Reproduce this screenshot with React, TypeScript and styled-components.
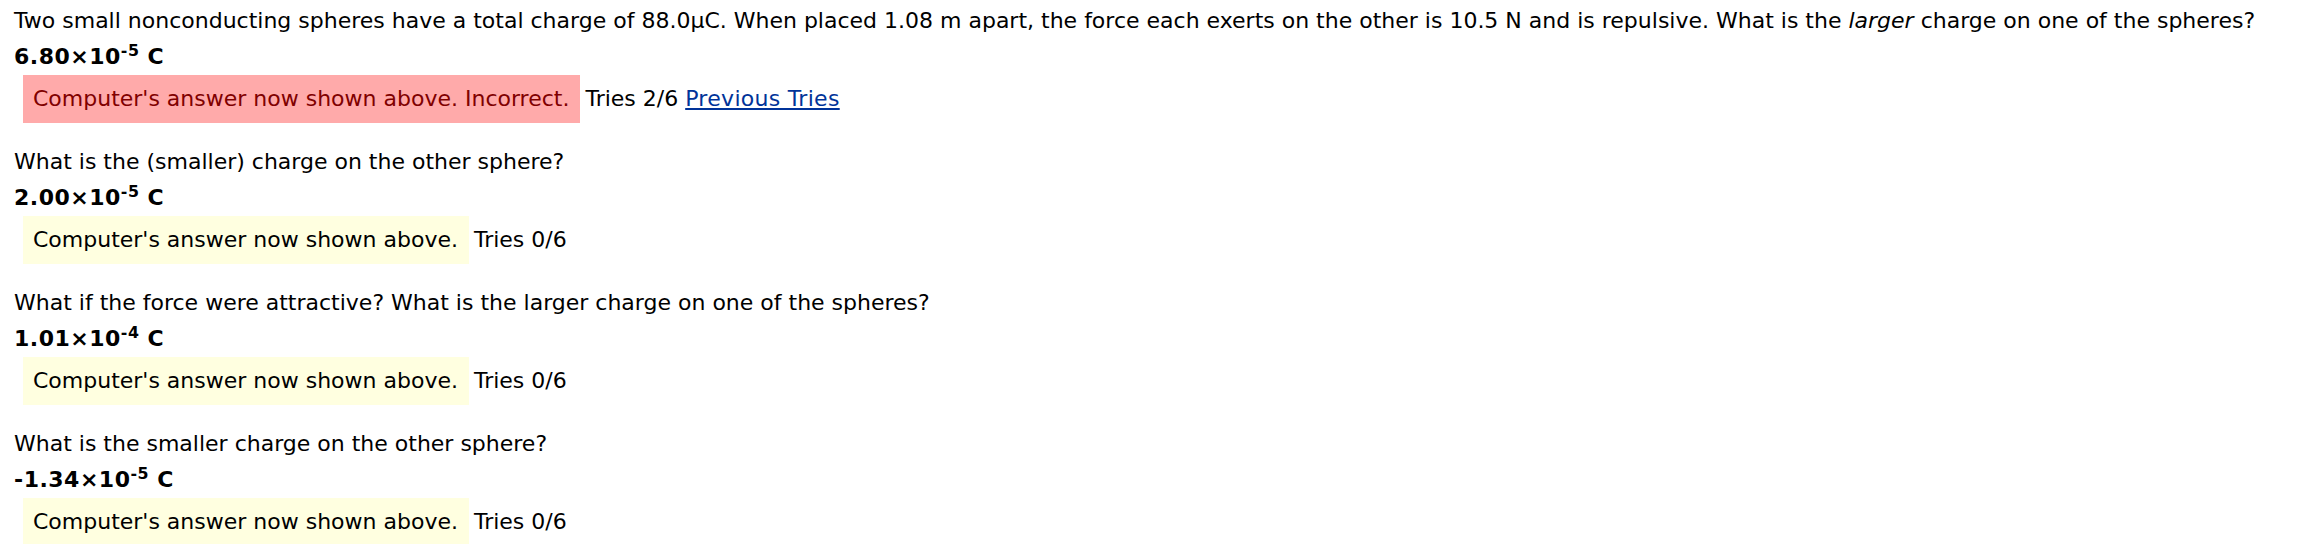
import React from "react";
import styled, { createGlobalStyle } from "styled-components";

const Global = createGlobalStyle`
  html, body { margin: 0; padding: 0; background: #ffffff; }
  body { font-family: "DejaVu Sans", Verdana, sans-serif; color: #000; }
`;

const Page = styled.div`
  padding: 9px 14px 0 14px;
  font-size: 22px;
  line-height: 24px;
`;

const Block = styled.section`
  display: flex;
  flex-direction: column;
  align-items: flex-start;
  padding-bottom: 27px;
`;

const Question = styled.div`
  white-space: nowrap;
`;

const Answer = styled.div`
  margin-top: 12px;
  font-weight: bold;
  letter-spacing: 0.5px;
  sup {
    font-size: 0.72em;
    line-height: 0;
    vertical-align: 0.5em;
  }
`;

const FeedbackRow = styled.div`
  margin-top: 6px;
  margin-left: 9px;
  display: flex;
  align-items: center;
  white-space: pre;
`;

const Status = styled.span<{ $tone: "incorrect" | "shown" }>`
  display: inline-block;
  padding: 12px 11px 12px 10px;
  background: ${(p) => (p.$tone === "incorrect" ? "#ffaaaa" : "#ffffe0")};
  color: ${(p) => (p.$tone === "incorrect" ? "#800000" : "#000")};
`;

const Tries = styled.span`
  margin-left: 5px;
`;

const Link = styled.a`
  color: #003399;
  text-decoration: underline;
  letter-spacing: 0.3px;
`;

type Item = {
  q: React.ReactNode;
  mant: string;
  exp: string;
  tone: "incorrect" | "shown";
  tries: string;
  prev?: boolean;
};

const items: Item[] = [
  {
    q: (
      <>
        Two small nonconducting spheres have a total charge of 88.0μC. When placed 1.08 m apart, the force each exerts on the other is 10.5 N and is repulsive. What is the <i>larger</i> charge on one of the spheres?
      </>
    ),
    mant: "6.80",
    exp: "-5",
    tone: "incorrect",
    tries: "2/6",
    prev: true,
  },
  { q: "What is the (smaller) charge on the other sphere?", mant: "2.00", exp: "-5", tone: "shown", tries: "0/6" },
  {
    q: "What if the force were attractive? What is the larger charge on one of the spheres?",
    mant: "1.01",
    exp: "-4",
    tone: "shown",
    tries: "0/6",
  },
  { q: "What is the smaller charge on the other sphere?", mant: "-1.34", exp: "-5", tone: "shown", tries: "0/6" },
];

export default function App() {
  return (
    <>
      <Global />
      <Page>
        {items.map((it, i) => (
          <Block key={i}>
            <Question>{it.q}</Question>
            <Answer>
              {it.mant}×10<sup>{it.exp}</sup> C
            </Answer>
            <FeedbackRow>
              <Status $tone={it.tone}>
                {it.tone === "incorrect"
                  ? "Computer's answer now shown above. Incorrect."
                  : "Computer's answer now shown above."}
              </Status>
              <Tries>Tries {it.tries} </Tries>
              {it.prev && <Link href="#">Previous Tries</Link>}
            </FeedbackRow>
          </Block>
        ))}
      </Page>
    </>
  );
}
